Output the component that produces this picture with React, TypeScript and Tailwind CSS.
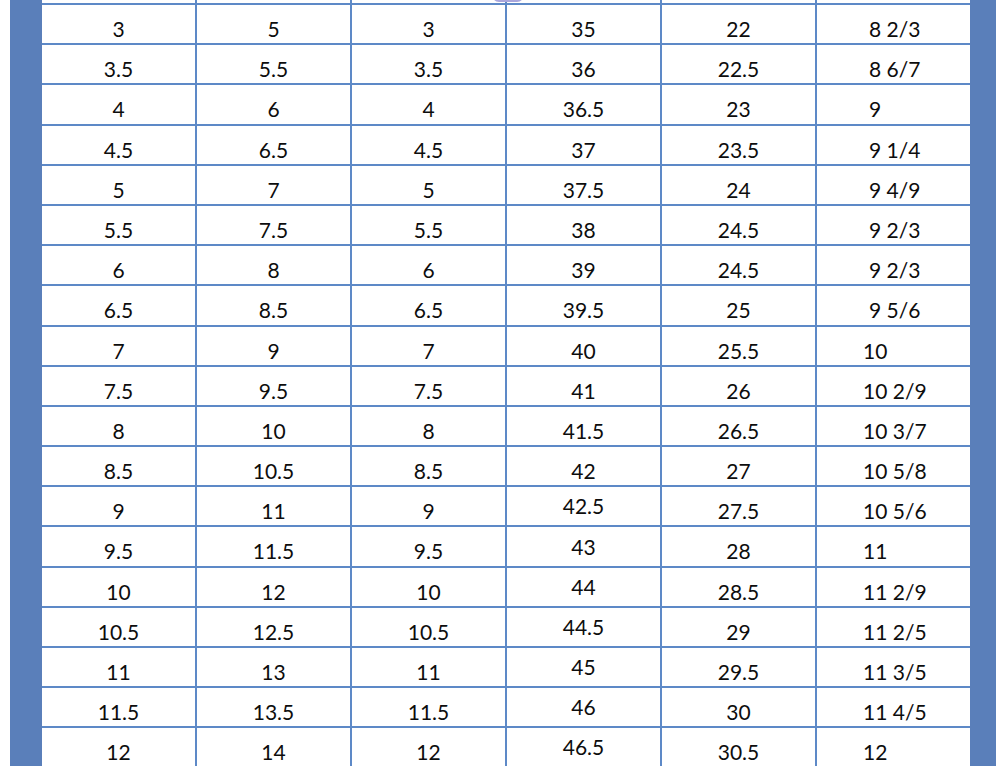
const halves = Array.from({ length: 19 }, (_, i) => 3 + i * 0.5)

const usSizes = halves.map((n) => String(n))
const ukSizes = halves.map((n) => String(n + 2))
const euSizes = ["35", "36", "36.5", "37", "37.5", "38", "39", "39.5", "40", "41", "41.5", "42", "42.5", "43", "44", "44.5", "45", "46", "46.5"]
const cmSizes = ["22", "22.5", "23", "23.5", "24", "24.5", "24.5", "25", "25.5", "26", "26.5", "27", "27.5", "28", "28.5", "29", "29.5", "30", "30.5"]
const inchSizes = ["8 2/3", "8 6/7", "9", "9 1/4", "9 4/9", "9 2/3", "9 2/3", "9 5/6", "10", "10 2/9", "10 3/7", "10 5/8", "10 5/6", "11", "11 2/9", "11 2/5", "11 3/5", "11 4/5", "12"]

const rows = halves.map((_, i) => [usSizes[i], ukSizes[i], usSizes[i], euSizes[i], cmSizes[i], inchSizes[i]])

function Cell({ value, col, row }: { value: string; col: number; row: number }) {
  // EU column switches to middle alignment from 42.5 down
  const centered = col === 3 && row >= 12
  if (col === 5) {
    const wide = value.split(" ")[0].length > 1
    return (
      <div className={`bg-white flex items-start ${wide ? "pl-[46px]" : "pl-[52px]"} pt-[12px]`}>
        <span className="leading-[24px]">{value}</span>
      </div>
    )
  }
  return (
    <div className={`bg-white flex justify-center ${centered ? "items-center" : "items-start pt-[12px]"}`}>
      <span className="leading-[24px]">{value}</span>
    </div>
  )
}

export default function App() {
  return (
    <div className="w-[1000px] h-[766px] overflow-hidden bg-white flex relative" style={{ fontFamily: "Lato, 'Open Sans', sans-serif" }}>
      <div className="w-[10px] shrink-0" />
      <div className="w-[32px] shrink-0 bg-[#5a7fba]" />

      <div className="w-[928px] shrink-0 relative">
        <div className="grid grid-cols-6 gap-[2px] bg-[#5d89c7] grid-rows-[3px_repeat(19,38.2px)] text-[21px] text-[#0d0d0d]">
          {Array.from({ length: 6 }, (_, c) => (
            <div key={`top-${c}`} className="bg-white" />
          ))}
          {rows.map((r, ri) => r.map((v, ci) => <Cell key={`${ri}-${ci}`} value={v} col={ci} row={ri} />))}
        </div>
        {/* bottom of a badge from the header above */}
        <div className="absolute left-[450px] top-[-12px] w-[32px] h-[14px] rounded-full bg-[#a9a6dc]" />
      </div>

      <div className="w-[26px] shrink-0 bg-[#5a7fba]" />
      <div className="flex-1" />
    </div>
  )
}
